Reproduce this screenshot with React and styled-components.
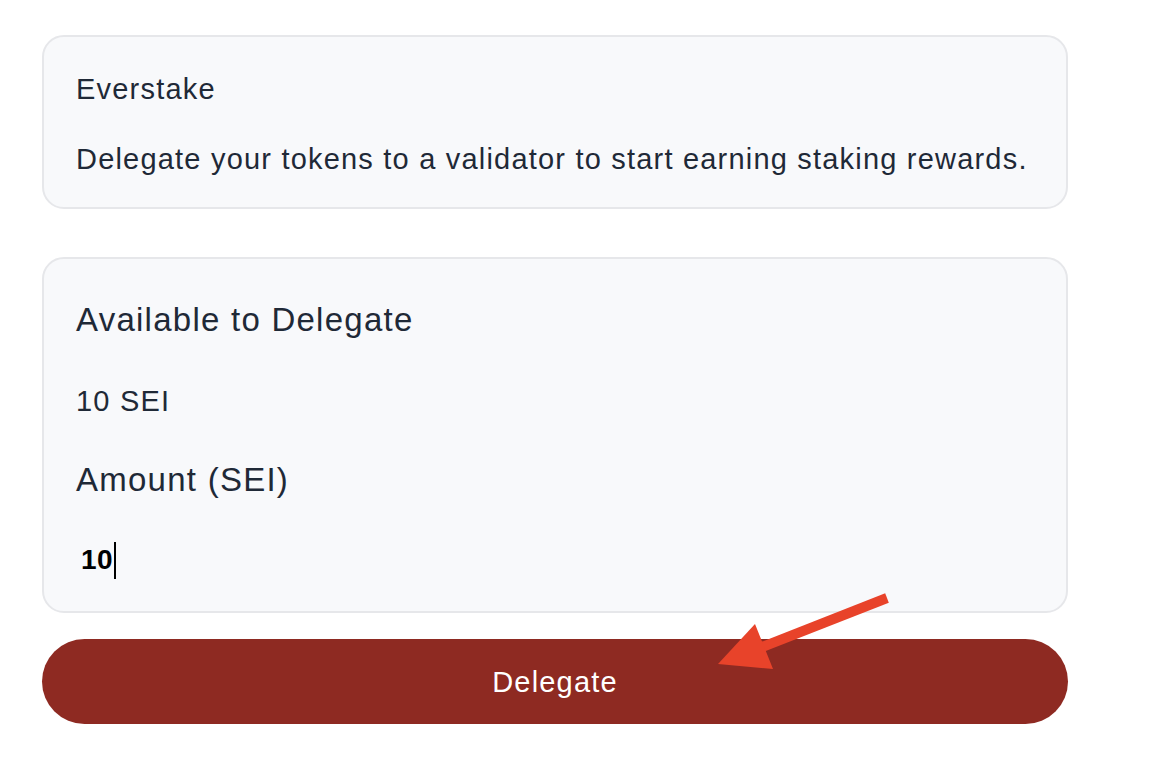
import React from 'react'
import styled, { createGlobalStyle } from 'styled-components'

const GlobalStyle = createGlobalStyle`
    html, body {
        margin: 0;
        padding: 0;
        background: #ffffff;
    }
    body {
        font-family: "Liberation Sans", Arial, Helvetica, sans-serif;
        color: #1f2937;
    }
`

const Page = styled.main`
    position: relative;
    width: 1026px;
    margin-left: 42px;
    padding-top: 35px;
    display: flex;
    flex-direction: column;
`
const Card = styled.section`
    background: #f8f9fb;
    border: 2px solid #e6e7ea;
    border-radius: 22px;
    padding: ${p => p.$pad};
    display: flex;
    flex-direction: column;
    margin-bottom: ${p => p.$after || 0}px;
`
const Text = styled.p`
    margin: 0 0 ${p => p.$gap || 0}px;
    font-size: ${p => (p.$big ? 33 : 29)}px;
    line-height: ${p => (p.$big ? 48 : 42)}px;
    letter-spacing: ${p => (p.$big ? 1.25 : 1.2)}px;
    color: #1f2937;
`
const Field = styled.div`
    display: flex;
    align-items: center;
    height: 42px;
    padding-left: 5px;
    font-size: 28px;
    font-weight: 700;
    letter-spacing: 0.5px;
    color: #000;
`
const Caret = styled.span`
    display: inline-block;
    width: 2px;
    height: 37px;
    margin-left: 1px;
    background: #000;
`
const DelegateButton = styled.button`
    height: 85px;
    width: 100%;
    border: none;
    border-radius: 43px;
    background: #8e2a22;
    color: #ffffff;
    font-family: inherit;
    font-size: 29px;
    letter-spacing: 1.2px;
    padding: 1px 0 0;
    cursor: pointer;
`
const Pointer = styled.svg`
    position: absolute;
    left: 0;
    top: 0;
    pointer-events: none;
`

export default function App() {
    return (
        <>
            <GlobalStyle />
            <Page>
                <Card $pad="31px 32px 27px" $after={48}>
                    <Text $gap={28}>Everstake</Text>
                    <Text>Delegate your tokens to a validator to start earning staking rewards.</Text>
                </Card>
                <Card $pad="37px 32px 30px" $after={26}>
                    <Text $big $gap={36}>Available to Delegate</Text>
                    <Text $gap={34}>10 SEI</Text>
                    <Text $big $gap={35}>Amount (SEI)</Text>
                    <Field>10<Caret /></Field>
                </Card>
                <DelegateButton>Delegate</DelegateButton>
                {/* annotation arrow drawn over the button */}
                <Pointer width="1026" height="772" viewBox="42 0 1026 772">
                    <line x1="887" y1="598" x2="762" y2="647" stroke="#e8432a" strokeWidth="10" />
                    <polygon points="718,664 755,624 773,669" fill="#e8432a" />
                </Pointer>
            </Page>
        </>
    )
}
